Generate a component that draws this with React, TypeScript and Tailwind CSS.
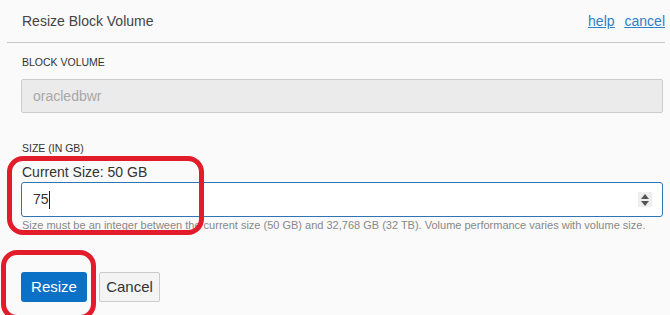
import React from "react";

export default function App() {
  return (
    <div
      className="relative w-[670px] h-[315px] overflow-hidden bg-[#fafafa] text-[#333]"
      style={{ fontFamily: '"Liberation Sans", Arial, sans-serif' }}
    >
      <div className="ml-[7px] mr-[5px] h-[43px] border-b border-[#c8c8c8] flex items-center justify-between pl-[15px] pr-[0px]">
        <span className="text-[14px] text-[#444]">Resize Block Volume</span>
        <div className="flex gap-[10px] text-[14px] text-[#2d7fc9] underline">
          <a>help</a>
          <a>cancel</a>
        </div>
      </div>

      <div className="pl-[21px] pr-[7px]">
        <div className="mt-[13px] text-[10.5px] leading-[12px] text-[#333] uppercase pl-[1px]">Block Volume</div>
        <div className="mt-[11px] h-[34px] rounded-[2px] border border-[#cdcdcd] bg-[#ebebeb] flex items-center pl-[11px] text-[14px] text-[#a8a8a8]">
          oracledbwr
        </div>

        <div className="mt-[29px] text-[10.5px] leading-[12px] text-[#333] pl-[1px]">SIZE (IN GB)</div>
        <div className="mt-[10px] text-[14px] leading-[16px] text-[#333] pl-[1px]">Current Size: 50 GB</div>
        <div className="mt-[2px] h-[35px] rounded-[3px] border border-[#2f74b5] bg-white flex items-center justify-between pl-[11px] pr-[10px] text-[14px] text-[#333]">
          <span className="flex items-center">
            75<span className="inline-block w-[1px] h-[18px] bg-[#222]"></span>
          </span>
          <span className="w-[14px] h-[15px] bg-[#eeeeee] flex flex-col items-center justify-center gap-[2px]">
            <svg width="8" height="5" viewBox="0 0 8 5"><path d="M4 0 L8 5 L0 5 Z" fill="#555" /></svg>
            <svg width="8" height="5" viewBox="0 0 8 5"><path d="M0 0 L8 0 L4 5 Z" fill="#555" /></svg>
          </span>
        </div>
        <div className="mt-[2px] text-[11px] leading-[13px] text-[#888] pl-[1px] whitespace-nowrap">
          Size must be an integer between the current size (50 GB) and 32,768 GB (32 TB). Volume performance varies with volume size.
        </div>

        <div className="mt-[40px] flex gap-[12px]">
          <button className="w-[66px] h-[30px] rounded-[3px] bg-[#0b71c6] text-white text-[15px]">
            Resize
          </button>
          <button className="w-[61px] h-[30px] rounded-[2px] bg-[#f4f4f4] border border-[#cbcbcb] text-[#333] text-[15px]">
            Cancel
          </button>
        </div>
      </div>

      <div className="absolute left-[7px] top-[156px] w-[197px] h-[79px] rounded-[16px] border-[5px] border-[#e21c2a] pointer-events-none" />
      <div className="absolute left-[1px] top-[250px] w-[95px] h-[70px] rounded-[16px] border-[5px] border-[#e21c2a] pointer-events-none" />
    </div>
  );
}
